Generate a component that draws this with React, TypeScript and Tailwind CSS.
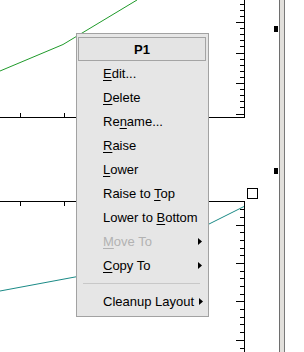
import React from 'react'

type Item = { label: string; key?: number; sub?: boolean; disabled?: boolean }

const items: Item[] = [
  { label: 'Edit...', key: 0 },
  { label: 'Delete', key: 0 },
  { label: 'Rename...', key: 2 },
  { label: 'Raise', key: 0 },
  { label: 'Lower', key: 0 },
  { label: 'Raise to Top', key: 9 },
  { label: 'Lower to Bottom', key: 9 },
  { label: 'Move To', key: 0, sub: true, disabled: true },
  { label: 'Copy To', key: 0, sub: true },
]

function Label({ item }: { item: Item }) {
  if (item.key === undefined) return <span>{item.label}</span>
  const k = item.key
  return (
    <span>
      {item.label.slice(0, k)}
      <span className="underline decoration-1 underline-offset-2">{item.label[k]}</span>
      {item.label.slice(k + 1)}
    </span>
  )
}

function Arrow() {
  return (
    <svg width="4" height="7" viewBox="0 0 4 7" className="ml-auto">
      <polygon points="0,0 4,3.5 0,7" fill="#000" />
    </svg>
  )
}

// plot backdrop: axes, ticks and the two traces
function Plot() {
  const topTicks = Array.from({ length: 19 }, (_, i) => 113.5 - 6.1 * i).filter((y) => y > 0)
  const botTicks = Array.from({ length: 20 }, (_, i) => 347.5 - 7.67 * i).filter((y) => y > 202)
  return (
    <svg width="304" height="352" className="absolute left-0 top-0">
      <rect x="0" y="0" width="304" height="352" fill="#fff" />
      <polyline points="0,71 63,44.5 137,0" fill="none" stroke="#1f9a2a" strokeWidth="1" />
      <polyline points="0,291 120,268.6 244,206.5" fill="none" stroke="#1a8a86" strokeWidth="1" />
      {/* upper panel */}
      <line x1="0" y1="117.5" x2="245" y2="117.5" stroke="#000" />
      <line x1="244.5" y1="0" x2="244.5" y2="118" stroke="#000" />
      <line x1="20.5" y1="113" x2="20.5" y2="117" stroke="#000" />
      <line x1="64.5" y1="113" x2="64.5" y2="117" stroke="#000" />
      {topTicks.map((y, i) => (
        <line key={i} x1={i % 5 === 0 ? 236 : 240} y1={Math.round(y) + 0.5} x2="244" y2={Math.round(y) + 0.5} stroke="#000" />
      ))}
      {/* lower panel */}
      <line x1="0" y1="201.5" x2="245" y2="201.5" stroke="#000" />
      <line x1="244.5" y1="201" x2="244.5" y2="352" stroke="#000" />
      <line x1="20.5" y1="202" x2="20.5" y2="206" stroke="#000" />
      <line x1="64.5" y1="202" x2="64.5" y2="206" stroke="#000" />
      {botTicks.map((y, i) => (
        <line key={i} x1={i % 5 === 1 ? 236 : 240} y1={Math.round(y) + 0.5} x2="244" y2={Math.round(y) + 0.5} stroke="#000" />
      ))}
      <rect x="247.5" y="188.5" width="10" height="10" fill="#fff" stroke="#000" />
      <rect x="274" y="26" width="4" height="6" fill="#000" />
      <rect x="274" y="168" width="4" height="6" fill="#000" />
      {/* window edge */}
      <rect x="279" y="0" width="1" height="352" fill="#6e6e6e" />
      <rect x="280" y="0" width="4" height="352" fill="#e2e0dc" />
      <rect x="284" y="0" width="1" height="352" fill="#7a7a7a" />
    </svg>
  )
}

export default function App() {
  return (
    <div className="relative w-[304px] h-[352px] overflow-hidden bg-white" style={{ fontFamily: '"Liberation Sans", Arial, sans-serif' }}>
      <Plot />
      <div className="absolute left-[76px] top-[33px] w-[133px] h-[284px] border border-[#a2a2a2] bg-[#e6e6e6] pl-[1px] pr-[2px] pt-[3px] text-[13px] text-black">
        <div className="h-[24px] border border-[#a4a4a4] bg-[#e4e4e4] flex items-center justify-center font-bold pt-[1px]">P1</div>
        {items.map((it) => (
          <div
            key={it.label}
            className={`h-[24px] flex items-center pl-[25px] pr-[4px] pt-[1px] ${it.disabled ? 'text-[#b2b2b2]' : ''}`}
          >
            <Label item={it} />
            {it.sub && <Arrow />}
          </div>
        ))}
        <div className="h-[12px] flex items-center pl-[5px] pr-[6px]">
          <div className="w-full h-[1px] bg-[#c8c8c8]" />
        </div>
        <div className="h-[24px] flex items-center pl-[25px] pr-[3px] pt-[1px]">
          <span>Cleanup Layout</span>
          <Arrow />
        </div>
      </div>
    </div>
  )
}
